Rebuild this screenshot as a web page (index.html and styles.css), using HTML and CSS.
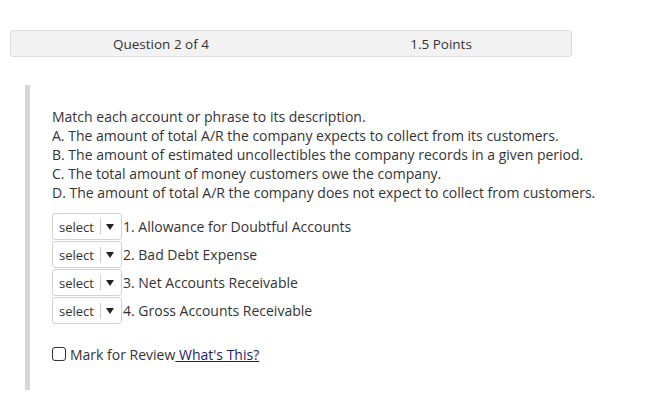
FILE: index.html
```html
<!DOCTYPE html>
<html>
<head>
<meta charset="utf-8">
<link rel="stylesheet" href="styles.css">
</head>
<body>
<div class="header">
  <div class="hcell">Question 2 of 4</div>
  <div class="hcell">1.5 Points</div>
</div>
<div class="question">
  <div class="prompt">
    <div>Match each account or phrase to its description.</div>
    <div>A. The amount of total A/R the company expects to collect from its customers.</div>
    <div>B. The amount of estimated uncollectibles the company records in a given period.</div>
    <div>C. The total amount of money customers owe the company.</div>
    <div>D. The amount of total A/R the company does not expect to collect from customers.</div>
  </div>
  <div class="rows">
    <div class="row"><span class="sel"><span class="sel-text">select</span><span class="sel-div"></span><span class="sel-arrow"></span></span><span class="label">1. Allowance for Doubtful Accounts</span></div>
    <div class="row"><span class="sel"><span class="sel-text">select</span><span class="sel-div"></span><span class="sel-arrow"></span></span><span class="label">2. Bad Debt Expense</span></div>
    <div class="row"><span class="sel"><span class="sel-text">select</span><span class="sel-div"></span><span class="sel-arrow"></span></span><span class="label">3. Net Accounts Receivable</span></div>
    <div class="row"><span class="sel"><span class="sel-text">select</span><span class="sel-div"></span><span class="sel-arrow"></span></span><span class="label">4. Gross Accounts Receivable</span></div>
  </div>
  <div class="review"><span class="cb"></span><span>Mark for Review</span><a href="#" class="link">&nbsp;What's This?</a></div>
</div>
</body>
</html>
```
FILE: styles.css
```css
html, body {
  margin: 0;
  padding: 0;
  background: #fff;
}
body {
  font-family: "Open Sans", "Liberation Sans", sans-serif;
  font-size: 14px;
  color: #333;
  padding: 30px 0 0 10px;
}
.header {
  width: 560px;
  height: 25px;
  border: 1px solid #dcdcdc;
  border-radius: 3px;
  background: #f2f2f2;
  display: grid;
  grid-template-columns: 300px 1fr;
  align-items: center;
  font-size: 13.5px;
  color: #333;
}
.hcell {
  text-align: center;
}
.question {
  margin: 28px 0 0 15px;
  border-left: 5px solid #d6d6d6;
  padding: 22px 0 26px 22px;
  width: 580px;
}
.prompt {
  line-height: 19px;
}
.rows {
  margin-top: 11px;
  display: flex;
  flex-direction: column;
  gap: 1px;
}
.row {
  display: flex;
  align-items: center;
  height: 27px;
}
.sel {
  box-sizing: border-box;
  width: 70px;
  height: 27px;
  border: 1px solid #d2d2d2;
  border-radius: 3px;
  background: #fff;
  display: flex;
  align-items: center;
  font-size: 13px;
  color: #333;
}
.sel-text {
  padding-left: 6px;
  width: 41px;
}
.sel-div {
  width: 1px;
  height: 16px;
  background: #cfcfcf;
}
.sel-arrow {
  margin-left: 5px;
  width: 0;
  height: 0;
  border-left: 4.5px solid transparent;
  border-right: 4.5px solid transparent;
  border-top: 6px solid #222;
}
.label {
  margin-left: 1px;
}
.review {
  margin-top: 20px;
  display: flex;
  align-items: center;
  height: 20px;
}
.cb {
  box-sizing: border-box;
  width: 14px;
  height: 14px;
  border: 1px solid #333;
  border-radius: 3px;
  margin-right: 4px;
}
.link {
  color: #1f1a66;
  text-decoration: underline;
}
```
